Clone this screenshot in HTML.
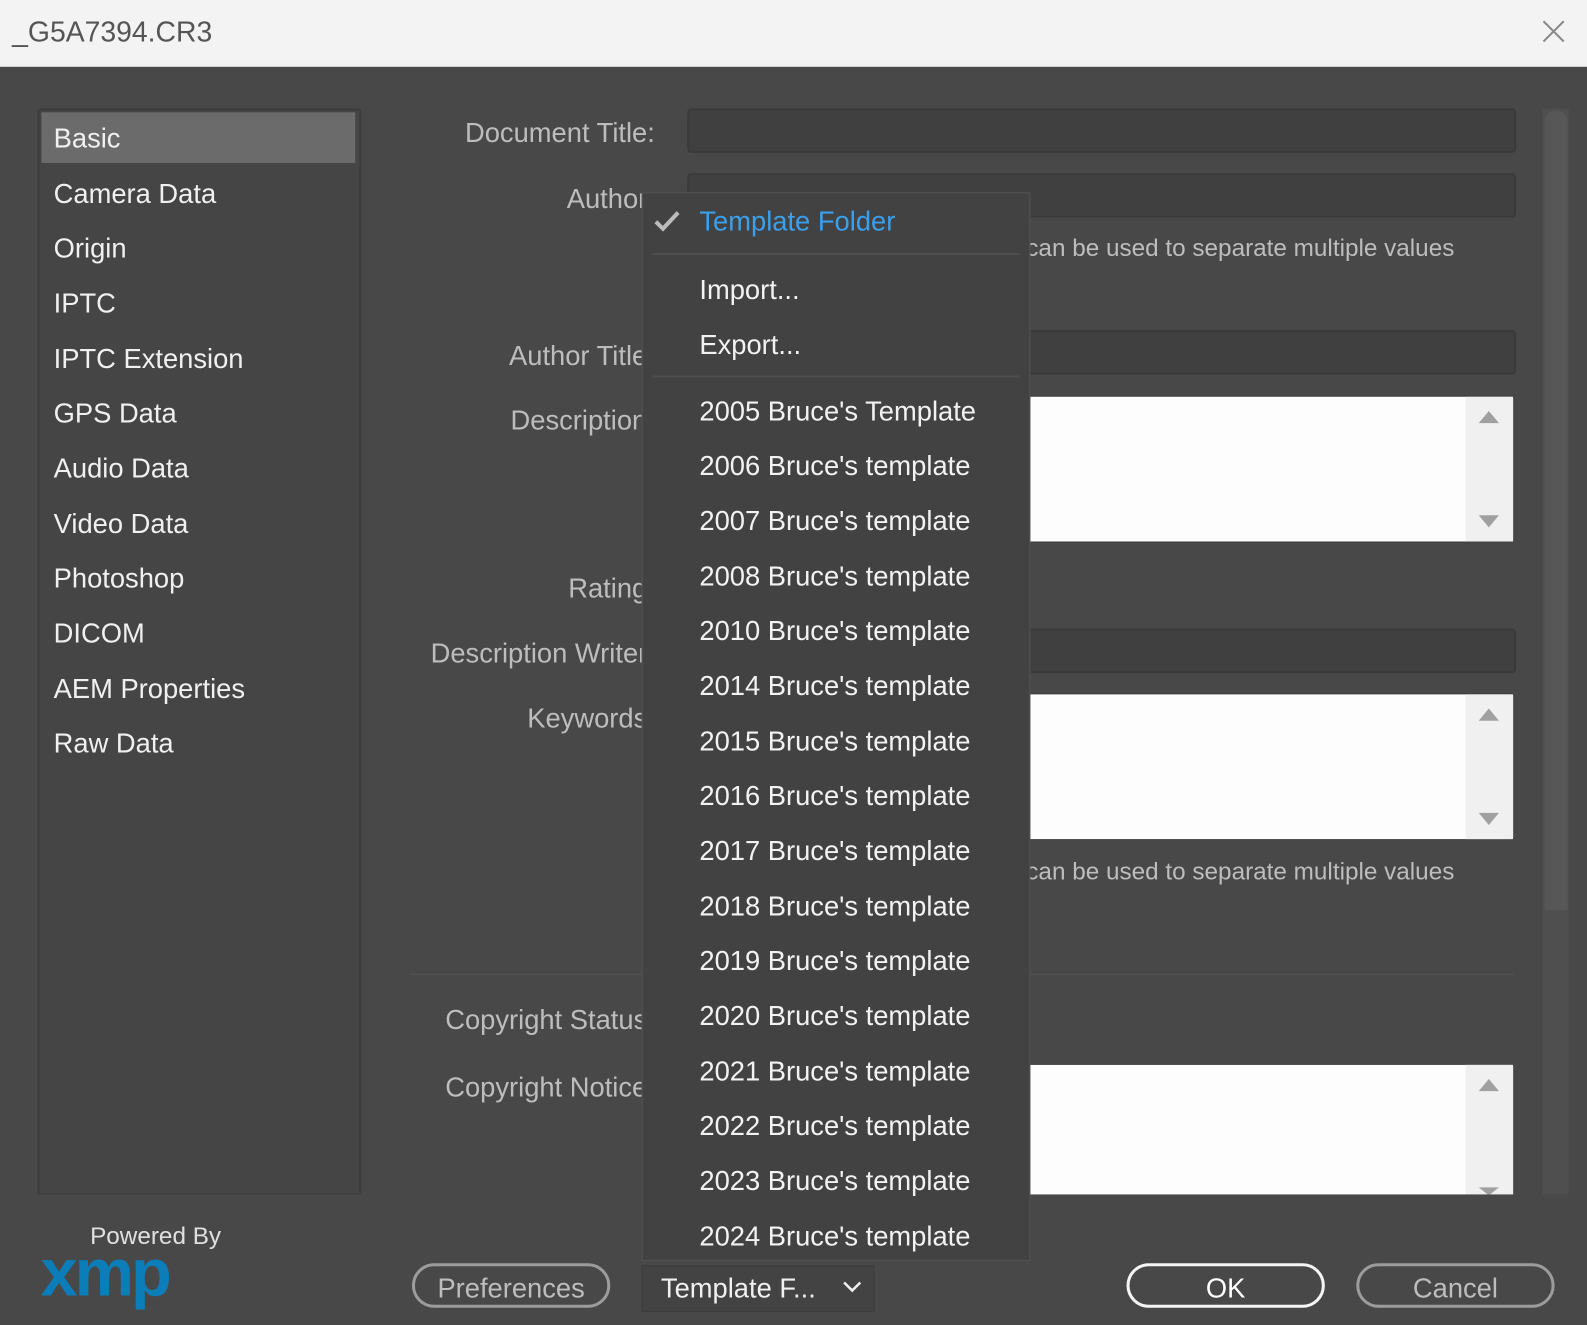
<!DOCTYPE html>
<html><head><meta charset="utf-8"><style>
html,body{margin:0;padding:0;width:1587px;height:1325px;overflow:hidden;background:#484848}
#w{position:absolute;left:0;top:0;width:1568px;height:1309px;transform:scale(1.01212,1.01222);transform-origin:0 0;background:#484848;font-family:"Liberation Sans Narrow","Liberation Sans",sans-serif;font-size:27px}
.a{position:absolute;white-space:nowrap;line-height:1}
.title{position:absolute;left:0;top:0;width:1568px;height:66px;background:#f3f3f3}
.lp{position:absolute;left:37px;top:107px;width:316px;height:1070px;background:#454545;border:2px solid #3d3d3d;border-radius:3px}
.it{position:absolute;left:53px;color:#f0f0f0;transform:translateY(-50%)}
.lb{position:absolute;right:921px;color:#bdbdbd;transform:translateY(-50%)}
.f{position:absolute;left:679px;width:815px;background:#404040;border:2px solid #3a3a3a;border-radius:4px}
.wb{position:absolute;left:679px;width:815px;background:#fdfdfd;border-radius:3px;border:1px solid #3a3a3a}
.wb .s{position:absolute;right:0;top:0;bottom:0;width:47px;background:#f0f0f0}
.up{position:absolute;right:14px;width:0;height:0;border-left:10px solid transparent;border-right:10px solid transparent}
.m{position:absolute;left:634px;top:190px;width:384px;height:1056px;background:#424242;border:1px solid #555;box-sizing:border-box}
.mi{position:absolute;left:56px;color:#f2f2f2;transform:translateY(-50%)}
.btn{position:absolute;top:1248px;height:44px;border-radius:24px;box-sizing:border-box;text-align:center;line-height:44px}
</style></head><body><div id="w">
<div class="title"><div class="a" style="left:12px;top:18px;color:#555;font-size:28px">_G5A7394.CR3</div>
<svg style="position:absolute;left:1524px;top:20px" width="22" height="22"><path d="M1 1L21 21M21 1L1 21" stroke="#8a8a8a" stroke-width="2"/></svg></div>

<div class="lp"></div>
<div style="position:absolute;left:41px;top:111px;width:310px;height:50px;background:#6b6b6b"></div>
<div class="a it" style="top:137px">Basic</div>
<div class="a it" style="top:192px">Camera Data</div>
<div class="a it" style="top:246px">Origin</div>
<div class="a it" style="top:300px">IPTC</div>
<div class="a it" style="top:355px">IPTC Extension</div>
<div class="a it" style="top:409px">GPS Data</div>
<div class="a it" style="top:463px">Audio Data</div>
<div class="a it" style="top:518px">Video Data</div>
<div class="a it" style="top:572px">Photoshop</div>
<div class="a it" style="top:626px">DICOM</div>
<div class="a it" style="top:681px">AEM Properties</div>
<div class="a it" style="top:735px">Raw Data</div>

<div class="a lb" style="top:132px">Document Title:</div>
<div class="a lb" style="top:197px">Author:</div>
<div class="a lb" style="top:352px">Author Title:</div>
<div class="a lb" style="top:416px">Description:</div>
<div class="a lb" style="top:582px">Rating:</div>
<div class="a lb" style="top:646px">Description Writer:</div>
<div class="a lb" style="top:710px">Keywords:</div>
<div class="a lb" style="top:1008px">Copyright Status:</div>
<div class="a lb" style="top:1075px">Copyright Notice:</div>

<div class="f" style="top:107px;height:40px"></div>
<div class="f" style="top:171px;height:40px"></div>
<div class="a" style="left:1014px;top:234px;color:#bdbdbd;font-size:24px">can be used to separate multiple values</div>
<div class="f" style="top:326px;height:40px"></div>
<div class="wb" style="top:391px;height:143px"><div class="s"></div><div class="up" style="top:14px;border-bottom:12px solid #a0a0a0"></div><div class="up" style="bottom:14px;border-top:12px solid #a0a0a0"></div></div>
<div class="f" style="top:621px;height:40px"></div>
<div class="wb" style="top:685px;height:143px"><div class="s"></div><div class="up" style="top:14px;border-bottom:12px solid #a0a0a0"></div><div class="up" style="bottom:14px;border-top:12px solid #a0a0a0"></div></div>
<div class="a" style="left:1014px;top:850px;color:#bdbdbd;font-size:24px">can be used to separate multiple values</div>
<div style="position:absolute;left:405px;top:962px;width:1091px;height:1px;background:#555"></div>
<div class="wb" style="top:1051px;height:129px;border-radius:3px 3px 0 0"><div class="s"></div><div class="up" style="top:14px;border-bottom:12px solid #a0a0a0"></div><div class="up" style="bottom:0px;border-top:8px solid #a0a0a0"></div></div>
<div style="position:absolute;left:0;top:1180px;width:1568px;height:129px;background:#484848"></div>

<div class="a" style="left:89px;top:1210px;color:#e0e0e0;font-size:24px">Powered By</div>
<div class="a" style="left:40px;top:1228px;color:#0b7db8;font-size:66px;font-weight:bold;letter-spacing:-3px;font-family:'Liberation Sans',sans-serif;line-height:0.9">xmp</div>

<div style="position:absolute;left:1524px;top:107px;width:26px;height:1073px;background:#4f4f4f"></div>
<div style="position:absolute;left:1526px;top:109px;width:23px;height:790px;background:#575757;border-radius:12px 12px 3px 3px"></div>

<div class="m">
<svg style="position:absolute;left:11px;top:16px" width="26" height="22"><path d="M2 12L9 19L24 3" stroke="#bbb" stroke-width="4" fill="none"/></svg>
<div class="a mi" style="top:28px;color:#3aa0ee">Template Folder</div>
<div style="position:absolute;left:9px;top:59px;width:364px;height:2px;background:#4e4e4e"></div>
<div class="a mi" style="top:96px">Import...</div>
<div class="a mi" style="top:150px">Export...</div>
<div style="position:absolute;left:9px;top:180px;width:364px;height:2px;background:#4e4e4e"></div>
<div class="a mi" style="top:216px">2005 Bruce's Template</div>
<div class="a mi" style="top:270px">2006 Bruce's template</div>
<div class="a mi" style="top:324px">2007 Bruce's template</div>
<div class="a mi" style="top:379px">2008 Bruce's template</div>
<div class="a mi" style="top:433px">2010 Bruce's template</div>
<div class="a mi" style="top:487px">2014 Bruce's template</div>
<div class="a mi" style="top:542px">2015 Bruce's template</div>
<div class="a mi" style="top:596px">2016 Bruce's template</div>
<div class="a mi" style="top:650px">2017 Bruce's template</div>
<div class="a mi" style="top:705px">2018 Bruce's template</div>
<div class="a mi" style="top:759px">2019 Bruce's template</div>
<div class="a mi" style="top:813px">2020 Bruce's template</div>
<div class="a mi" style="top:868px">2021 Bruce's template</div>
<div class="a mi" style="top:922px">2022 Bruce's template</div>
<div class="a mi" style="top:976px">2023 Bruce's template</div>
<div class="a mi" style="top:1031px">2024 Bruce's template</div>
</div>

<div class="btn" style="left:407px;width:196px;border:3px solid #9c9c9c;color:#bdbdbd">Preferences</div>
<div style="position:absolute;left:634px;top:1250px;width:230px;height:46px;background:#434343;border:1px solid #3c3c3c;box-sizing:border-box"></div>
<div class="a" style="left:653px;top:1260px;color:#f0f0f0">Template F...</div>
<svg style="position:absolute;left:832px;top:1264px" width="20" height="14"><path d="M2 3L10 11L18 3" stroke="#eee" stroke-width="2.5" fill="none"/></svg>
<div class="btn" style="left:1113px;width:196px;border:3px solid #f5f5f5;color:#fff">OK</div>
<div class="btn" style="left:1340px;width:196px;border:3px solid #9c9c9c;color:#bdbdbd">Cancel</div>
</div></body></html>
